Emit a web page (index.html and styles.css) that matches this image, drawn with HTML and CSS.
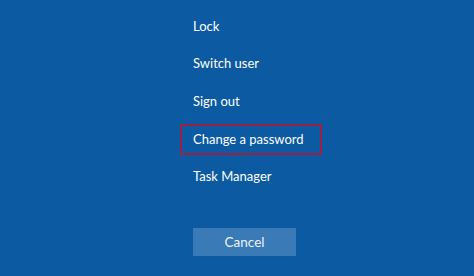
FILE: index.html
```html
<!DOCTYPE html>
<html lang="en">
<head>
  <meta charset="UTF-8" />
  <title>Security options</title>
  <link rel="stylesheet" href="styles.css">
</head>
<body>
  <div class="options">
    <ul class="menu">
      <li class="item">Lock</li>
      <li class="item">Switch user</li>
      <li class="item">Sign out</li>
      <li class="item"><span class="selected">Change a password</span></li>
      <li class="item">Task Manager</li>
    </ul>
    <button class="cancel">Cancel</button>
  </div>
</body>
</html>
```

FILE: styles.css
```css
body {
  margin: 0;
  width: 474px;
  height: 276px;
  overflow: hidden;
  background-color: #0b5aa2;
  color: #ffffff;
  font-family: Lato, "Open Sans", sans-serif;
}

.options {
  padding: 7px 0 0 193px;
}

.menu {
  list-style: none;
  margin: 0;
  padding: 0;
}

.item {
  display: flex;
  align-items: center;
  height: 37.5px;
  font-size: 13px;
}

.selected {
  line-height: 27px;
  margin: 3px 0 0 -13px;
  padding: 0 16px 0 11px;
  border: 2px solid #9c1f45;
}

.cancel {
  display: block;
  margin-top: 33px;
  width: 103px;
  height: 28px;
  border: 0;
  background-color: #3a7ab6;
  color: #eef3f8;
  font-family: Lato, "Open Sans", sans-serif;
  font-size: 13.5px;
  padding: 0;
}
```
